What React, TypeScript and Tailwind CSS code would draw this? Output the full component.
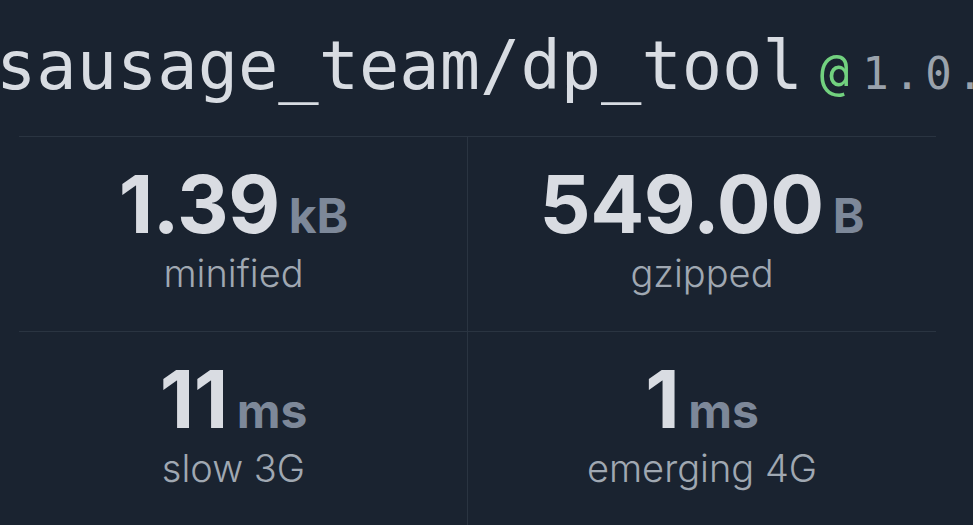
const stats = [
  { value: "1.39", unit: "kB", label: "minified" },
  { value: "549.00", unit: "B", label: "gzipped" },
  { value: "11", unit: "ms", label: "slow 3G" },
  { value: "1", unit: "ms", label: "emerging 4G" },
];

const Stat = ({ value, unit, label }: { value: string; unit: string; label: string }) => (
  <div className="flex flex-col items-center pt-[27px]">
    <div className="flex items-baseline leading-none">
      <span className="text-[80px] font-bold text-[#d9dce2] tracking-[-0.5px]">{value}</span>
      <span className="ml-[9px] text-[48px] font-bold text-[#7d8899]">{unit}</span>
    </div>
    <div className="mt-[10px] text-[38px] font-light leading-none text-[#a0a8b2]">{label}</div>
  </div>
);

export default function App() {
  return (
    <div className="min-h-screen w-full overflow-hidden bg-[#1a2330] font-['Inter',sans-serif]">
      <div className="w-[936px]">
        <h1 className="-ml-[4px] h-[136px] pt-[33px] whitespace-nowrap font-['DejaVu_Sans_Mono',monospace] leading-none text-[#d8dce2]">
          <span className="text-[67px]">sausage_team/dp_tool</span>
          <span className="ml-[17px] text-[49px] text-[#72d17f]">@</span>
          <span className="ml-[13px] text-[44px] tracking-[5px] text-[#9aa2ac]">1.0.0</span>
        </h1>

        <div className="ml-[19px] h-px bg-[#2a3441]" />
        <div className="grid grid-cols-2">
          <div className="h-[194px] border-r border-[#2a3441]">
            <Stat {...stats[0]} />
          </div>
          <div className="h-[194px]">
            <Stat {...stats[1]} />
          </div>
        </div>
        <div className="ml-[19px] h-px bg-[#2a3441]" />
        <div className="grid grid-cols-2">
          <div className="h-[194px] border-r border-[#2a3441]">
            <Stat {...stats[2]} />
          </div>
          <div className="h-[194px]">
            <Stat {...stats[3]} />
          </div>
        </div>
      </div>
    </div>
  );
}
